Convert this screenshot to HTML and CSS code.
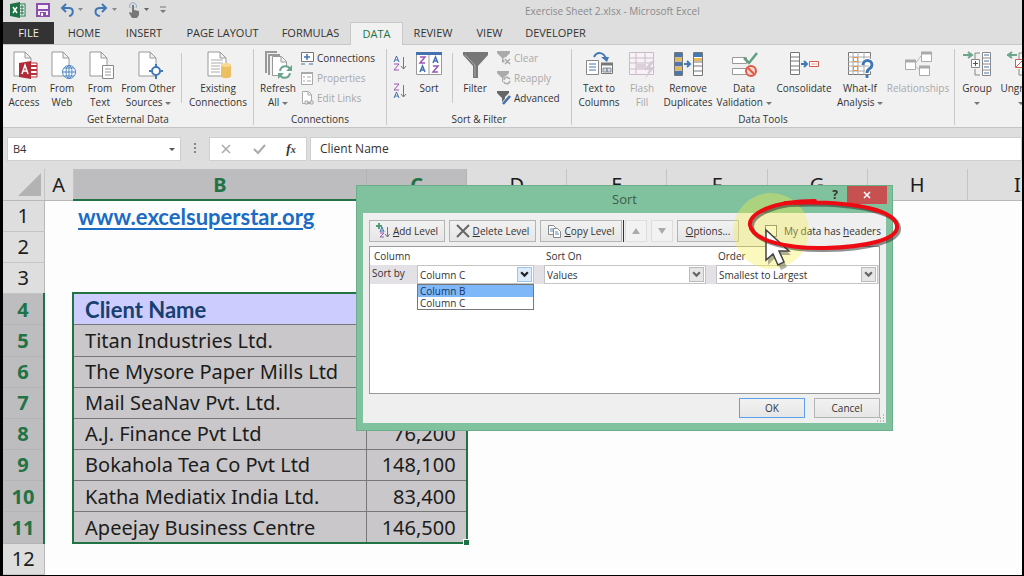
FILE: index.html
```html
<!DOCTYPE html>
<html lang="en">
<head>
<meta charset="utf-8">
<title>Exercise Sheet 2.xlsx - Microsoft Excel</title>
<link rel="stylesheet" href="styles.css">
</head>
<body>
<div class="app">
  <header class="titlebar">
    <div class="quick">
      <svg width="16" height="16" viewBox="0 0 16 16"><rect x="8" y="2" width="7" height="12" fill="#fff" stroke="#217346"/><path d="M9 5h5M9 8h5M9 11h5M12 3v10" stroke="#217346"/><path d="M0 2l10-2v16L0 14z" fill="#1e7145"/><path d="M3 5l4 6M7 5l-4 6" stroke="#fff" stroke-width="1.5"/></svg>
      <button class="qbtn" aria-label="Save"><svg width="14" height="14" viewBox="0 0 14 14"><path d="M1 1h12v12H1z" fill="#f4eef8" stroke="#8b4fb0" stroke-width="2"/><path d="M2 7h10" stroke="#8b4fb0" stroke-width="2"/><path d="M4 9h6v4H4z" fill="#8b4fb0"/><path d="M5 10h2v3H5z" fill="#fff"/></svg></button>
      <button class="qbtn" aria-label="Undo"><svg width="24" height="14" viewBox="0 0 24 14"><path d="M6 1L2 5l4 4M2 5h7c5 0 5 7 0 8" fill="none" stroke="#3f78b8" stroke-width="2"/><path d="M18 5h5l-2.500 3z" fill="#888"/></svg></button>
      <button class="qbtn" aria-label="Redo"><svg width="24" height="14" viewBox="0 0 24 14"><path d="M8 1l4 4-4 4M12 5H6C0 5 0 12 6 13" fill="none" stroke="#3f78b8" stroke-width="2"/><path d="M18 5h5l-2.500 3z" fill="#888"/></svg></button>
      <button class="qbtn touch" aria-label="Touch mode"><svg width="22" height="16" viewBox="0 0 22 16"><path d="M2 6a3.500 3.500 0 1 1 6 0" fill="none" stroke="#8ba8c6"/><path d="M4 3h2v5l5 1v4l-2 3H4l-3-5 1-1 2 1z" fill="#777"/><path d="M16 6h5l-2.500 3z" fill="#666"/></svg></button>
      <button class="qbtn" aria-label="Customize toolbar"><svg width="6" height="8" viewBox="0 0 6 8"><path d="M0 1h6" stroke="#777"/><path d="M0 4h6L3 7z" fill="#777"/></svg></button>
    </div>
    <h1 class="doc-title">Exercise Sheet 2.xlsx - Microsoft Excel</h1>
  </header>

  <nav class="tabs">
    <button class="tab file">FILE</button>
    <button class="tab t-md">HOME</button>
    <button class="tab t-md">INSERT</button>
    <button class="tab t-xl">PAGE LAYOUT</button>
    <button class="tab t-lg">FORMULAS</button>
    <button class="tab active">DATA</button>
    <button class="tab t-md">REVIEW</button>
    <button class="tab t-sm">VIEW</button>
    <button class="tab t-lg">DEVELOPER</button>
  </nav>

  <section class="ribbon">
    <div class="group">
      <div class="tools">
        <button class="big b38"><svg width="28" height="28" viewBox="0 0 28 28"><path d="M4 1h11l6 6v18H4zM15 1v6h6" fill="#fff" stroke="#999"/><path d="M20 12h7v14h-7" fill="#fff" stroke="#b5323e"/><path d="M20 15h7M20 19h7M20 23h7" stroke="#b5323e" stroke-width="2"/><path d="M9 12l12-2v18L9 26z" fill="#b02a37"/><path d="M12 23l3-9 3 9M13 20h4" stroke="#fff" stroke-width="1.500" fill="none"/></svg><span>From<br>Access</span></button>
        <button class="big b38"><svg width="28" height="28" viewBox="0 0 28 28"><path d="M4 1h11l6 6v18H4zM15 1v6h6" fill="#fff" stroke="#999"/><circle cx="21" cy="21" r="6.500" fill="#fff" stroke="#4b86c2"/><ellipse cx="21" cy="21" rx="3" ry="6.500" fill="none" stroke="#4b86c2"/><path d="M14 21h14M21 14v14M16 17h10M16 25h10" stroke="#4b86c2"/></svg><span>From<br>Web</span></button>
        <button class="big b38"><svg width="28" height="28" viewBox="0 0 28 28"><path d="M4 1h11l6 6v18H4zM15 1v6h6" fill="#fff" stroke="#999"/><path d="M16.500 14.500h11v13h-11z" fill="#fff" stroke="#888"/><path d="M19 18h6M19 21h6M19 24h6" stroke="#999"/></svg><span>From<br>Text</span></button>
        <button class="big b59"><svg width="28" height="28" viewBox="0 0 28 28"><path d="M4 1h11l6 6v18H4zM15 1v6h6" fill="#fff" stroke="#999"/><circle cx="21" cy="20" r="4" fill="#fff" stroke="#4279b5" stroke-width="2"/><path d="M21 13v4M21 23v5M14 20h3M25 20h3" stroke="#4279b5" stroke-width="2"/></svg><span>From Other<br>Sources <i class="caret"></i></span></button>
        <span class="rule"></span>
        <button class="big b66"><svg width="28" height="28" viewBox="0 0 28 28"><path d="M4 1h12l6 6v18H4zM16 1v6h6" fill="#fff" stroke="#999"/><path d="M7 9h12M7 12h12M7 15h9M7 18h9M7 21h9" stroke="#aaa"/><path d="M17 14v11c0 3 10 3 10 0V14" fill="#ecbf62"/><ellipse cx="22" cy="14" rx="5" ry="2" fill="#f6d993"/></svg><span>Existing<br>Connections</span></button>
      </div>
      <div class="caption">Get External Data</div>
    </div>

    <div class="group">
      <div class="tools">
        <button class="big b44"><svg width="28" height="28" viewBox="0 0 28 28"><path d="M2 22V1h11M5 24V4h11" fill="none" stroke="#999" stroke-width="2"/><path d="M8.500 5.500h9l5 5v14h-14zM17 6v5h5" fill="#fff" stroke="#999"/><circle cx="21" cy="21" r="6" fill="#fff"/><path d="M16 20c1-6 8-6 10-2M26 22c-1 6-8 6-10 2" fill="none" stroke="#6da58c" stroke-width="2"/><path d="M28 14v6h-6zM14 28v-6h6z" fill="#6da58c"/></svg><span>Refresh<br>All <i class="caret"></i></span></button>
        <div class="stack links">
          <button class="small"><svg width="14" height="14" viewBox="0 0 14 14"><path d="M1.500 1.500h12v9h-12z" fill="#fff" stroke="#777"/><path d="M7 3v6M4 6h6" stroke="#4472b0" stroke-width="1.500"/><path d="M1 13h4M9 13h4" stroke="#4472b0"/></svg>Connections</button>
          <button class="small" disabled><svg width="14" height="14" viewBox="0 0 14 14"><path d="M1.500 1.500h11v12h-11z" fill="#fff" stroke="#aaa"/><path d="M1 2h12" stroke="#aaa" stroke-width="2"/><path d="M3 6h2M7 6h4M3 10h2M7 10h4" stroke="#aaa"/></svg>Properties</button>
          <button class="small" disabled><svg width="14" height="14" viewBox="0 0 14 14"><path d="M2.500.5h6l3 3v9h-9zM8 1v3h3" fill="#fff" stroke="#aaa"/><path d="M5 10h3v3H5zM10 10h3v3h-3zM7 11.500h4" fill="#eee" stroke="#aaa"/></svg>Edit Links</button>
        </div>
      </div>
      <div class="caption">Connections</div>
    </div>

    <div class="group">
      <div class="tools">
        <div class="sorters">
          <button class="mini" aria-label="Sort A to Z"><svg width="14" height="16" viewBox="0 0 14 16"><path d="M1 7l2.500-6L6 7M2 5h3" fill="none" stroke="#4472b0"/><path d="M1 9h5l-5 6h5" fill="none" stroke="#9a57b5"/><path d="M10.500 2v12M8 11l2.500 3 2.500-3" fill="none" stroke="#777"/></svg></button>
          <button class="mini" aria-label="Sort Z to A"><svg width="14" height="16" viewBox="0 0 14 16"><path d="M1 15l2.500-6L6 15M2 13h3" fill="none" stroke="#4472b0"/><path d="M1 1h5L1 7h5" fill="none" stroke="#9a57b5"/><path d="M10.500 2v12M8 11l2.500 3 2.500-3" fill="none" stroke="#777"/></svg></button>
        </div>
        <button class="big b40"><svg width="28" height="28" viewBox="0 0 28 28"><path d="M1.500 3.500h25v20h-25zM14 4v20" fill="#fff" stroke="#999"/><path d="M1 2.500h26" stroke="#4472b0" stroke-width="3"/><path d="M5 6h5l-5 6h5M18 15h5l-5 6h5" fill="none" stroke="#9a57b5" stroke-width="1.500"/><path d="M5 21l2.500-6 2.500 6M6 19h3M18 12l2.500-6 2.500 6M19 10h3" fill="none" stroke="#4472b0" stroke-width="1.500"/></svg><span>Sort</span></button>
        <span class="rule"></span>
        <button class="big b38"><svg width="28" height="28" viewBox="0 0 28 28"><path d="M2 1h25v3L17 15v12h-5V15L2 4z" fill="#777"/><path d="M4 4l10 10v12" fill="none" stroke="#aaa"/></svg><span>Filter</span></button>
        <div class="stack filters">
          <button class="small" disabled><svg width="14" height="14" viewBox="0 0 14 14"><path d="M0 0h13v2L8 7v6l-3-2V7L0 2z" fill="#aaa"/><path d="M7 7l6 6M13 7l-6 6" stroke="#f1f1f1" stroke-width="3"/><path d="M8 8l5 5M13 8l-5 5" stroke="#aaa" stroke-width="1.500"/></svg>Clear</button>
          <button class="small" disabled><svg width="14" height="14" viewBox="0 0 14 14"><path d="M0 0h12v2L8 6v6l-3-1V7L0 2z" fill="#aaa"/><circle cx="10" cy="9" r="4" fill="#f1f1f1"/><path d="M7 9c1-4 4-3 6-1M13 10c-1 4-5 3-6 1" fill="none" stroke="#aaa" stroke-width="1.500"/></svg>Reapply</button>
          <button class="small"><svg width="14" height="14" viewBox="0 0 14 14"><path d="M0 0h12v2L8 6v7l-3-2V7L0 2z" fill="#666"/><path d="M6 13l7-8" stroke="#f1f1f1" stroke-width="4"/><path d="M6 13l7-8" stroke="#4472b0" stroke-width="2.500"/></svg>Advanced</button>
        </div>
      </div>
      <div class="caption">Sort &amp; Filter</div>
    </div>

    <div class="group">
      <div class="tools">
        <button class="big b50"><svg width="28" height="28" viewBox="0 0 28 28"><path d="M1.500 9.500h12v14h-12z" fill="#fff" stroke="#888"/><path d="M4 13h7M4 16h7M4 19h7" stroke="#4472b0"/><path d="M16.500 12.500h11v10h-11z" fill="#fff" stroke="#777"/><path d="M16 13h12" stroke="#777" stroke-width="3"/><path d="M18 17h4v4h-4zM22 17h4v4h-4z" fill="#cfdaf0" stroke="#888"/><path d="M9 6c3-6 10-5 12 2" fill="none" stroke="#4279b5" stroke-width="2"/><path d="M16 6h8l-2 5z" fill="#4279b5"/></svg><span>Text to<br>Columns</span></button>
        <button class="big b36" disabled><svg width="28" height="28" viewBox="0 0 28 28"><path d="M1.500 1.500h24v22h-24z" fill="#f8f2f7" stroke="#c9bcc8"/><path d="M1 7h25M1 12h25M1 18h25M8 1v23M17 1v11" stroke="#c9bcc8"/><path d="M8 13h10v5H8z" fill="#ddd0dc"/><path d="M23 10l-7 9h5l-4 9 10-12h-5l5-6z" fill="#d6cbd5"/></svg><span>Flash<br>Fill</span></button>
        <button class="big b56"><svg width="30" height="28" viewBox="0 0 30 28"><path d="M1.500 1.500h8v23h-8zM20.500 1.500h9v23h-9z" fill="#fff" stroke="#777"/><path d="M2 2h7v4H2zM2 11h7v4H2zM2 20h7v4H2zM21 2h8v4h-8z" fill="#4279b5"/><path d="M2 7h7v3H2zM2 16h7v3H2zM21 7h8v3h-8z" fill="#e6b85c"/><path d="M21 11h8M21 15h8M21 20h8M2 6h7M2 11h7M2 15h7M2 20h7" stroke="#777"/><path d="M11 13h6M14 10l3 3-3 3" fill="none" stroke="#4279b5" stroke-width="2"/></svg><span>Remove<br>Duplicates</span></button>
        <button class="big b56"><svg width="28" height="28" viewBox="0 0 28 28"><path d="M2.500 6.500h14v6h-14zM2.500 17.500h14v6h-14z" fill="#fff" stroke="#999"/><path d="M14 7l5 5 8-10" fill="none" stroke="#5f9f80" stroke-width="2.500"/><circle cx="21" cy="20" r="5" fill="#f4d5cf" stroke="#dc5a45" stroke-width="2"/><path d="M18 17l6 6" stroke="#dc5a45" stroke-width="2"/></svg><span>Data<br>Validation <i class="caret"></i></span></button>
        <button class="big b64"><svg width="30" height="28" viewBox="0 0 30 28"><path d="M1.500 1.500h9v22h-9z" fill="#fff" stroke="#777"/><path d="M1 6h10M1 10h10M1 15h10M1 19h10" stroke="#777"/><path d="M12 13h6M15 10l3 3-3 3" fill="none" stroke="#4279b5" stroke-width="2"/><path d="M20.500 10.500h9v5h-9z" fill="#fff" stroke="#d95a4a"/><path d="M22 13h6" stroke="#e7a79d"/></svg><span>Consolidate</span></button>
        <button class="big b48"><svg width="28" height="28" viewBox="0 0 28 28"><path d="M2.500 1.500h22v22h-22z" fill="#fff" stroke="#777"/><path d="M2 6h23M2 11h23M2 15h23M2 20h23M7 1v23M12 1v23M18 1v23" stroke="#aaa"/><path d="M7.500 6.500h4v4h-4zM7.500 15.500h4v4h-4z" fill="#fff" stroke="#e6913a"/><path d="M17 14c0-6 9-6 9 0 0 4-5 3-5 8M21 24v4" fill="none" stroke="#fff" stroke-width="5"/><path d="M17 14c0-6 9-6 9 0 0 4-5 3-5 8M21 24v3" fill="none" stroke="#4279b5" stroke-width="3"/></svg><span>What-If<br>Analysis <i class="caret"></i></span></button>
        <button class="big b68" disabled><svg width="28" height="28" viewBox="0 0 28 28"><path d="M11 13l6-8M11 15l5 4" stroke="#bbb"/><path d="M1.500 9.500h10v9h-10zM17.500 1.500h10v9h-10zM15.500 15.500h10v9h-10z" fill="#fff" stroke="#aaa"/><path d="M1 10h11M17 2h11M15 16h11" stroke="#aaa" stroke-width="3"/></svg><span>Relationships</span></button>
      </div>
      <div class="caption">Data Tools</div>
    </div>

    <div class="group last">
      <div class="tools">
        <button class="big b40"><svg width="28" height="28" viewBox="0 0 28 28"><path d="M0 4h9M5 1l4 3-4 3" fill="none" stroke="#6da58c" stroke-width="2"/><path d="M17 2h-5v6M12 18v6h5" fill="none" stroke="#888"/><path d="M8.500 8.500h8v8h-8z" fill="#fff" stroke="#888"/><path d="M10 12.500h5M12.500 10v5" stroke="#555"/><path d="M19.500 1.500h8v23h-8zM19 7h9M19 13h9M19 19h9" fill="#fff" stroke="#888"/><path d="M21 4h5M21 10h5M21 16h5M21 22h5" stroke="#4472b0"/></svg><span>Group<br><i class="caret"></i></span></button>
        <button class="big b48"><svg width="28" height="28" viewBox="0 0 28 28"><path d="M0 4h10M5 1L1 4l4 3" fill="none" stroke="#6da58c" stroke-width="2"/><path d="M17 2h-5v6M12 18v6h5" fill="none" stroke="#888"/><path d="M8.500 8.500h8v8h-8zM9 16l7-7" fill="#fff" stroke="#d95a4a"/><path d="M19.500 1.500h8v23h-8zM19 7h9M19 13h9M19 19h9" fill="#fff" stroke="#888"/></svg><span>Ungroup<br><i class="caret"></i></span></button>
      </div>
    </div>
  </section>

  <section class="formula-bar">
    <div class="name-box"><input type="text" value="B4" aria-label="Name box"><i class="caret dark"></i></div>
    <svg class="dots" width="4" height="14" viewBox="0 0 4 14"><path d="M1 2h2M1 6h2M1 10h2" stroke="#888" stroke-width="2"/></svg>
    <div class="fx">
      <button aria-label="Cancel entry"><svg width="12" height="12" viewBox="0 0 12 12"><path d="M2 2l8 8M10 2l-8 8" stroke="#aaa" stroke-width="1.500"/></svg></button>
      <button aria-label="Enter"><svg width="13" height="12" viewBox="0 0 13 12"><path d="M1 6l4 4 7-8" fill="none" stroke="#aaa" stroke-width="2"/></svg></button>
      <button aria-label="Insert function" class="fx-label">f<small>x</small></button>
    </div>
    <input class="formula" type="text" value="Client Name" aria-label="Formula bar">
  </section>

  <main class="sheet">
    <table class="grid">
      <colgroup><col class="c-head"><col class="c-a"><col class="c-b"><col class="c-n"><col class="c-n"><col class="c-n"><col class="c-n"><col class="c-n"><col class="c-n"><col class="c-n"></colgroup>
      <thead><tr><th class="corner"><svg width="24" height="23" viewBox="0 0 24 23"><path d="M23 0v23H0z" fill="#b3b3b3"/></svg></th><th>A</th><th class="sel">B</th><th class="sel">C</th><th>D</th><th>E</th><th>F</th><th>G</th><th>H</th><th>I</th></tr></thead>
      <tbody>
        <tr><th>1</th><td></td><td class="site" colspan="8"><a href="#">www.excelsuperstar.org</a></td></tr>
        <tr><th>2</th><td colspan="9"></td></tr>
        <tr><th>3</th><td colspan="9"></td></tr>
        <tr class="on first"><th>4</th><td></td><td class="name">Client Name</td><td class="num"></td><td colspan="6"></td></tr>
        <tr class="on"><th>5</th><td></td><td class="name">Titan Industries Ltd.</td><td class="num"></td><td colspan="6"></td></tr>
        <tr class="on"><th>6</th><td></td><td class="name">The Mysore Paper Mills Ltd</td><td class="num"></td><td colspan="6"></td></tr>
        <tr class="on"><th>7</th><td></td><td class="name">Mail SeaNav Pvt. Ltd.</td><td class="num"></td><td colspan="6"></td></tr>
        <tr class="on"><th>8</th><td></td><td class="name">A.J. Finance Pvt Ltd</td><td class="num">76,200</td><td colspan="6"></td></tr>
        <tr class="on"><th>9</th><td></td><td class="name">Bokahola Tea Co Pvt Ltd</td><td class="num">148,100</td><td colspan="6"></td></tr>
        <tr class="on"><th>10</th><td></td><td class="name">Katha Mediatix India Ltd.</td><td class="num">83,400</td><td colspan="6"></td></tr>
        <tr class="on end"><th>11</th><td></td><td class="name">Apeejay Business Centre</td><td class="num">146,500<span class="handle"></span></td><td colspan="6"></td></tr>
        <tr><th>12</th><td colspan="9"></td></tr>
      </tbody>
    </table>
  </main>

  <div class="dialog" role="dialog" aria-labelledby="dlg-title">
    <div class="dlg-bar">
      <h2 id="dlg-title">Sort</h2>
      <div class="dlg-ctl"><button class="help" aria-label="Help">?</button><button class="close" aria-label="Close"><svg width="8" height="8" viewBox="0 0 8 8"><path d="M1 1l6 6M7 1L1 7" stroke="#fff" stroke-width="1.500"/></svg></button></div>
    </div>
    <div class="dlg-body">
      <div class="dlg-tools">
        <button class="btn w76"><svg width="14" height="16" viewBox="0 0 14 16"><path d="M3 0v6M0 3h6" stroke="#4f9a78" stroke-width="2"/><path d="M4 9l2-5 2 5M5 8h2" fill="none" stroke="#4472b0"/><path d="M4 10h4l-4 4h4" fill="none" stroke="#9a57b5"/><path d="M11.500 4v10M9 11l2.500 3 2-3" fill="none" stroke="#777"/></svg><span><u>A</u>dd Level</span></button>
        <button class="btn w87"><svg width="14" height="14" viewBox="0 0 14 14"><path d="M1 1l12 12M13 1L1 13" stroke="#666" stroke-width="2"/></svg><span><u>D</u>elete Level</span></button>
        <button class="btn w82"><svg width="14" height="14" viewBox="0 0 14 14"><path d="M1.500 1.500h5l2 2v7h-7z" fill="#fff" stroke="#888"/><path d="M6.500 4.500h4l3 3v6h-7z" fill="#fff" stroke="#888"/><path d="M3 5h3M3 7h3M8 8h3M8 10h4" stroke="#5b86bd"/></svg><span><u>C</u>opy Level</span></button>
        <span class="divider"></span>
        <button class="btn flat" aria-label="Move up" disabled><svg width="8" height="6" viewBox="0 0 8 6"><path d="M4 0l4 6H0z" fill="#aaa"/></svg></button>
        <button class="btn flat" aria-label="Move down" disabled><svg width="8" height="6" viewBox="0 0 8 6"><path d="M4 6l4-6H0z" fill="#aaa"/></svg></button>
        <button class="btn w62"><span><u>O</u>ptions...</span></button>
        <label class="check"><input type="checkbox"><span>My data has <u>h</u>eaders</span></label>
      </div>
      <div class="levels">
        <div class="level heads"><span>Column</span><span>Sort On</span><span>Order</span></div>
        <div class="level row">
          <label for="by">Sort by</label>
          <div class="combo open">
            <select id="by"><option>Column C</option><option>Column B</option></select>
            <svg class="arrow" viewBox="0 0 8 6"><path d="M1 1l3 3 3-3" fill="none" stroke="#222" stroke-width="2"/></svg>
            <ul class="menu"><li class="hot">Column B</li><li>Column C</li></ul>
          </div>
          <div class="combo"><select aria-label="Sort On"><option>Values</option></select><svg class="arrow" viewBox="0 0 8 6"><path d="M1 1l3 3 3-3" fill="none" stroke="#666" stroke-width="2"/></svg></div>
          <div class="combo"><select aria-label="Order"><option>Smallest to Largest</option></select><svg class="arrow" viewBox="0 0 8 6"><path d="M1 1l3 3 3-3" fill="none" stroke="#666" stroke-width="2"/></svg></div>
        </div>
      </div>
      <div class="dlg-foot">
        <button class="btn w66 primary">OK</button>
        <button class="btn w66">Cancel</button>
      </div>
      <svg class="grip" width="8" height="8" viewBox="0 0 8 8"><path d="M6 1h1M6 4h1M3 4h1M6 7h1M3 7h1M0 7h1" stroke="#aaa" stroke-width="1.500"/></svg>
    </div>
    <svg class="mark" width="176" height="90" viewBox="0 0 176 90">
      <circle cx="36" cy="43" r="38" fill="#f6ee4a" fill-opacity=".36"/>
      <path d="M30 43v32l7-7 6 12 6-3-6-12h10z" fill="#555" fill-opacity=".45" transform="translate(3 2)"/>
      <path d="M31 42v30l7-6 5 11 6-3-5-11h10z" fill="#fff" stroke="#444" stroke-width="1.500"/>
      <path d="M80 13C36 13 14 26 15 37C17 53 55 61 90 60C130 59 162 52 162 39C162 24 126 12 50 15" transform="translate(2 2)" fill="none" stroke="#222" stroke-opacity=".5" stroke-width="4"/>
      <path d="M80 13C36 13 14 26 15 37C17 53 55 61 90 60C130 59 162 52 162 39C162 24 126 12 50 15" fill="none" stroke="#ee0a12" stroke-width="4" stroke-linecap="round"/>
    </svg>
  </div>
</div>
</body>
</html>
```
FILE: styles.css
```css
* { box-sizing: border-box; }

body {
  margin: 0;
  background: #000;
  color: #333;
  font: 500 10px/14px "Open Sans", "Noto Sans", sans-serif;
}

button, input, select { font: inherit; color: inherit; margin: 0; }
button { border: 0; padding: 0; background: none; }
svg { display: block; flex: none; }

.app {
  position: relative;
  display: flex;
  flex-direction: column;
  height: 100vh;
  overflow: hidden;
  background: #dedede;
  border: solid #000;
  border-width: 0 2px 1px 3px;
}

.titlebar { display: flex; align-items: center; flex: none; height: 22px; }
.quick { display: flex; align-items: center; gap: 10px; padding: 0 0 2px 7px; }
.doc-title { margin: 0 0 0 359px; font-size: 10px; font-weight: 500; color: #8a8a8a; white-space: nowrap; }

.tabs { display: flex; flex: none; height: 23px; border-bottom: 1px solid #c8c8c8; font-size: 11px; }
.tab { text-align: center; white-space: nowrap; }
.tab.file { width: 51px; background: #333; color: #eee; }
.t-sm { width: 53px; }
.t-md { width: 60px; }
.t-lg { width: 79px; }
.t-xl { width: 97px; }
.tab.active { width: 53px; height: 23px; background: #f1f1f1; border: 1px solid #c8c8c8; border-bottom: 0; color: #217346; }

.ribbon { display: flex; flex: none; height: 83px; overflow: hidden; background: #f1f1f1; border-bottom: 1px solid #c4c4c4; }
.group { display: flex; flex-direction: column; justify-content: space-between; flex: none; margin: 4px 0 2px; padding: 0 2px; border-right: 1px solid #c8c8c8; }
.group.last { border: 0; }
.tools { display: flex; padding-top: 2px; }
.caption { text-align: center; line-height: 12px; }
.big { display: flex; flex-direction: column; align-items: center; gap: 2px; flex: none; white-space: nowrap; }
.big:disabled, .small:disabled { color: #a8a8a8; }
.b36 { width: 36px; }
.b38 { width: 38px; }
.b40 { width: 40px; }
.b44 { width: 44px; }
.b48 { width: 48px; }
.b50 { width: 50px; }
.b56 { width: 56px; }
.b59 { width: 59px; }
.b64 { width: 64px; }
.b66 { width: 66px; }
.b68 { width: 68px; }
.rule { width: 1px; height: 50px; margin: 2px 3px; background: #c8c8c8; }
.stack { display: flex; flex-direction: column; gap: 6px; }
.links { width: 84px; }
.filters { width: 75px; padding-left: 3px; }
.small { display: flex; align-items: center; gap: 3px; white-space: nowrap; }
.sorters { display: flex; flex-direction: column; gap: 12px; padding: 4px 2px 0 4px; }
.mini { display: flex; }
.caret { display: inline-block; border: solid transparent; border-width: 3px 3px 0; border-top-color: #777; vertical-align: middle; }
.caret.dark { border-top-color: #555; }

.formula-bar { display: flex; align-items: stretch; flex: none; height: 24px; margin: 9px 0 8px 4px; }
.formula-bar > div, .formula { background: #fff; border: 1px solid #cfcfcf; }
.name-box { display: flex; align-items: center; width: 174px; padding: 0 5px; font-size: 11px; }
.name-box input { flex: 1; min-width: 0; padding: 0; border: 0; background: none; }
.dots { align-self: center; margin: 0 12px; }
.fx { display: flex; align-items: center; justify-content: space-around; width: 98px; margin-right: 3px; }
.fx-label { font-family: "Liberation Serif", serif; font-style: italic; font-weight: 700; font-size: 13px; }
.fx-label small { font-size: 10px; }
.formula { flex: 1; min-width: 0; padding: 0 9px; font-size: 12px; }

.sheet { flex: 1; min-height: 0; overflow: hidden; background: #fefdfe; }
.grid { width: 1065px; height: 100%; table-layout: fixed; border-collapse: collapse; font: 20px/24px "Noto Sans", "Open Sans", sans-serif; color: #1c1c1c; }
.grid th, .grid td { padding: 1px 0 0; white-space: nowrap; }
.c-head { width: 41px; }
.c-a { width: 29px; }
.c-b { width: 293px; }
.c-n { width: 100px; }
.grid thead th { height: 31px; background: #dedede; border-right: 1px solid #c4c4c4; border-bottom: 1px solid #b8b8b8; font-weight: 400; }
.grid thead .sel { background: #bdbcbe; border-right-color: #b4b4b4; border-bottom: 2px solid #217346; color: #217346; font-weight: 700; }
.corner svg { margin-left: 15px; }
.grid tbody th { background: #dedede; border-right: 1px solid #b8b8b8; border-bottom: 1px solid #c4c4c4; font-weight: 400; }
.grid .on th { background: #bdbcbe; border-right: 2px solid #217346; border-bottom-color: #b4b4b4; color: #217346; font-weight: 700; }
.grid .site { padding-left: 5px; font-family: Lato, sans-serif; font-size: 22px; font-weight: 700; }
.site a { color: #1a6cc4; text-decoration-thickness: 2px; text-underline-offset: 3px; }
.on .name, .on .num { background: #c9c7c9; border-bottom: 1px solid #777; }
.grid .on .name { padding-left: 11px; border-left: 2px solid #217346; border-right: 1px solid #777; }
.grid .on .num { position: relative; padding-right: 10px; text-align: right; border-right: 2px solid #217346; }
.grid .first .name, .grid .first .num { background: #ccccff; border-top: 2px solid #217346; }
.first .name { color: #17406f; font-family: Lato, sans-serif; font-size: 22px; font-weight: 700; }
.grid .end .name, .grid .end .num { border-bottom: 2px solid #217346; }
.handle { position: absolute; right: -3px; bottom: -3px; width: 5px; height: 5px; background: #217346; outline: 1px solid #fff; }

.dialog { position: absolute; left: 353px; top: 185px; width: 537px; height: 246px; display: flex; flex-direction: column; padding: 0 6px 7px; background: #80c29d; border: 1px solid #6cae89; }
.dlg-bar { position: relative; flex: none; height: 27px; }
.dlg-bar h2 { margin: 0; text-align: center; font-size: 13px; line-height: 27px; font-weight: 400; color: #3d5a4b; }
.dlg-ctl { position: absolute; right: -1px; top: 0; display: flex; }
.help { width: 24px; font-size: 12px; font-weight: 700; }
.close { display: flex; align-items: center; justify-content: center; width: 40px; height: 18px; background: #c75050; }
.dlg-body { position: relative; flex: 1; display: flex; flex-direction: column; padding: 7px 6px 2px; background: #f0eff0; }
.dlg-tools { display: flex; align-items: center; gap: 4px; height: 22px; margin-bottom: 4px; }
.btn { display: flex; align-items: center; justify-content: center; gap: 3px; height: 22px; white-space: nowrap; border: 1px solid #b4b4b4; background: linear-gradient(#f2f2f2, #e6e6e6); flex: none; }
.btn.flat { width: 22px; border-color: #ddd; background: #f2f2f2; }
.w62 { width: 62px; }
.w66 { width: 66px; }
.w76 { width: 76px; }
.w82 { width: 82px; }
.w87 { width: 87px; }
.divider { flex: none; width: 1px; height: 22px; margin: 0 -3px; background: #333; }
.check { display: flex; align-items: center; gap: 7px; margin-left: 22px; white-space: nowrap; }
.check input { appearance: none; flex: none; width: 12px; height: 12px; background: #fff; border: 1px solid #777; }
.levels { flex: 1; background: #fff; border: 1px solid #999; }
.level { display: grid; column-gap: 10px; align-items: center; white-space: nowrap; }
.level.heads { grid-template-columns: 162px 162px 1fr; height: 18px; padding-left: 4px; }
.level.row { grid-template-columns: 35px 117px 162px 162px; height: 19px; padding-left: 2px; background: #e3e1e6; }
.row label { padding-bottom: 4px; }
.combo { position: relative; background: #fff; height: 19px; border: 1px solid #c4c4c4; }
.combo select { appearance: none; display: block; width: 100%; height: 17px; padding: 0 2px; border: 0; background: none; border-radius: 0; }
.arrow { position: absolute; right: 1px; top: 1px; width: 15px; height: 15px; padding: 3px 2px; background: #e6e6e6; border: 1px solid #bbb; pointer-events: none; }
.open .arrow { background: #dcebfa; border-color: #9cc4ec; }
.menu { position: absolute; left: -1px; right: -1px; top: 18px; margin: 0; padding: 0; list-style: none; line-height: 12px; background: #fff; border: 1px solid #777; }
.menu li { padding-left: 2px; }
.hot { background: #7fb8f8; color: #17365d; }
.dlg-foot { display: flex; justify-content: flex-end; gap: 9px; padding: 4px 0 3px; }
.dlg-foot .btn { height: 20px; }
.btn.primary { border-color: #5aa2ee; }
.grip { position: absolute; right: 1px; bottom: 1px; }
.mark { position: absolute; left: 378px; top: 2px; overflow: visible; pointer-events: none; }
```
